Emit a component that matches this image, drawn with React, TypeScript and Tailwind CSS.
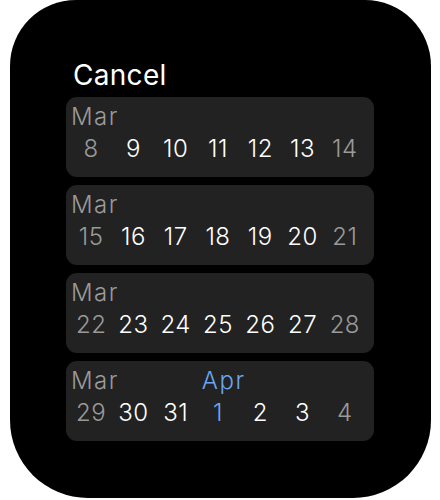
import React from 'react';

type Day = { n: number; tone: 'dim' | 'main' | 'accent' };

interface Week {
  labels: { text: string; col: number; accent?: boolean }[];
  days: Day[];
}

const weeks: Week[] = [
  {
    labels: [{ text: 'Mar', col: 1 }],
    days: [8, 9, 10, 11, 12, 13, 14].map((n, i) => ({ n, tone: i === 0 || i === 6 ? 'dim' : 'main' })),
  },
  {
    labels: [{ text: 'Mar', col: 1 }],
    days: [15, 16, 17, 18, 19, 20, 21].map((n, i) => ({ n, tone: i === 0 || i === 6 ? 'dim' : 'main' })),
  },
  {
    labels: [{ text: 'Mar', col: 1 }],
    days: [22, 23, 24, 25, 26, 27, 28].map((n, i) => ({ n, tone: i === 0 || i === 6 ? 'dim' : 'main' })),
  },
  {
    labels: [
      { text: 'Mar', col: 1 },
      { text: 'Apr', col: 4, accent: true },
    ],
    days: [29, 30, 31, 1, 2, 3, 4].map((n, i) => ({
      n,
      tone: i === 3 ? 'accent' : i === 0 || i === 6 ? 'dim' : 'main',
    })),
  },
];

const toneClass = {
  dim: 'text-[#9a9a9a]',
  main: 'text-white',
  accent: 'text-[#6aa6f0]',
};

function WeekCard({ week }: { week: Week }) {
  return (
    <div className="bg-[#222222] rounded-[11px] pl-1 pr-2 pt-2 pb-4 font-light">
      <div className="grid grid-cols-7 h-6 text-[24px] leading-6 tracking-[1.5px]">
        {week.labels.map((l) => (
          <span
            key={l.text}
            className={
              'whitespace-nowrap ' +
              (l.col === 1 ? 'col-start-1 pl-px ' : 'col-start-4 pl-[5px] ') +
              (l.accent ? 'text-[#6aa6f0]' : 'text-[#9a9a9a]')
            }
          >
            {l.text}
          </span>
        ))}
      </div>
      <div className="grid grid-cols-7 mt-2 h-6 text-[24px] leading-6 tracking-[0.5px]">
        {week.days.map((d) => (
          <span key={d.n} className={'text-center ' + toneClass[d.tone]}>
            {d.n}
          </span>
        ))}
      </div>
    </div>
  );
}

export default function App() {
  return (
    <div className="w-[440px] h-[500px] bg-white" style={{ fontFamily: 'Inter, "Noto Sans", sans-serif' }}>
      <div className="ml-[10px] w-[421px] h-[498px] bg-black rounded-t-[66px] rounded-b-[78px] pt-[61px] pl-14">
        <div className="text-white text-[28px] leading-7 pl-[7px] tracking-[0.3px]">Cancel</div>
        <div className="mt-2 w-[308px] flex flex-col gap-2">
          {weeks.map((w, i) => (
            <WeekCard key={i} week={w} />
          ))}
        </div>
      </div>
    </div>
  );
}
